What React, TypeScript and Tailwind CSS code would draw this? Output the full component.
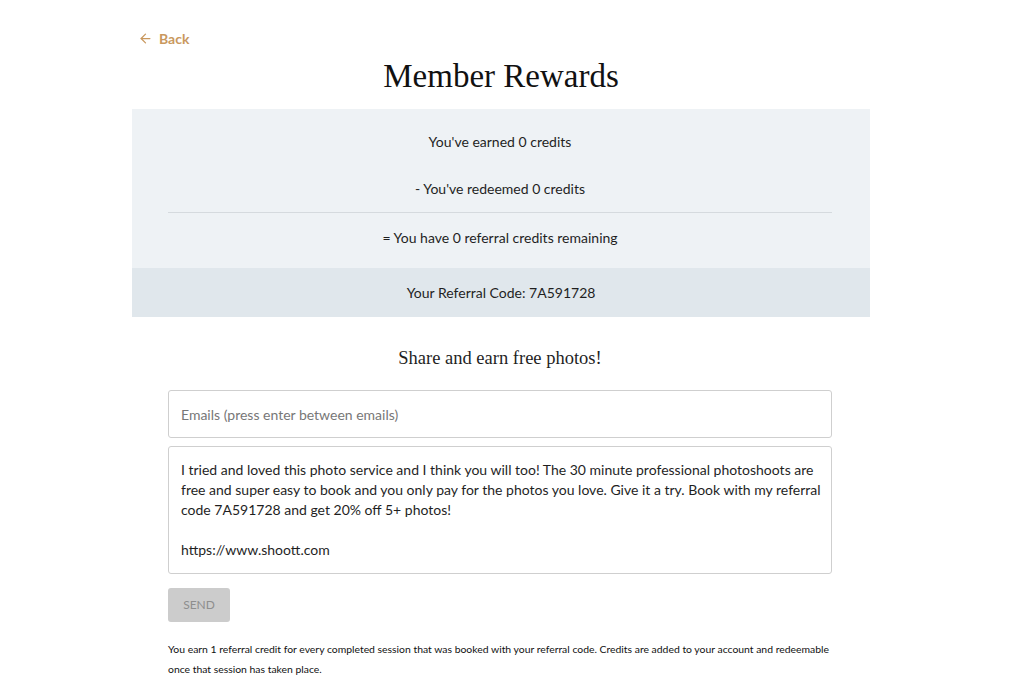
import { ArrowLeft } from "lucide-react";

const message =
  "I tried and loved this photo service and I think you will too! The 30 minute professional photoshoots are free and super easy to book and you only pay for the photos you love. Give it a try. Book with my referral code 7A591728 and get 20% off 5+ photos!\n\nhttps://www.shoott.com";

const App = () => {
  return (
    <div className="min-h-screen bg-white font-['Lato',sans-serif] text-[#1f1f1f]">
      <div className="w-[738px] pt-[28px] ml-[132px]">
        <a
          href="#"
          className="flex items-center gap-[6px] pl-[6px] text-[14px] font-bold text-[#c9985e]"
        >
          <ArrowLeft size={15} strokeWidth={2} />
          Back
        </a>
        <h1 className="mt-[7px] text-center font-['Liberation_Serif',serif] text-[33px] leading-[40px] text-[#111]">
          Member Rewards
        </h1>
        <div className="mt-[13px] bg-[#eef2f5] pl-[36px] pr-[38px] text-[14px]">
          <div className="flex h-[56px] items-center justify-center pt-[8px]">
            You've earned 0 credits
          </div>
          <div className="flex h-[48px] items-center justify-center border-b border-[#d5dade]">
            - You've redeemed 0 credits
          </div>
          <div className="flex h-[55px] items-center justify-center pb-[6px]">
            = You have 0 referral credits remaining
          </div>
        </div>
        <div className="flex h-[49px] items-center justify-center bg-[#e0e7ec] text-[14px]">
          Your Referral Code: 7A591728
        </div>
        <div className="pl-[36px] pr-[38px]">
          <h2 className="mt-[29px] text-center font-['Liberation_Serif',serif] text-[18.5px] leading-[24px]">
            Share and earn free photos!
          </h2>
          <input
            placeholder="Emails (press enter between emails)"
            className="mt-[20px] block h-[48px] w-full rounded-[3px] border border-[#cfcfcf] px-[12px] text-[14px] outline-none placeholder:text-[#777]"
          />
          <textarea
            defaultValue={message}
            className="mt-[8px] block h-[128px] w-full resize-none rounded-[3px] border border-[#cfcfcf] pl-[12px] pr-[8px] py-[13px] text-[14px] leading-[20px] outline-none"
          />
          <button
            disabled
            className="mt-[14px] h-[34px] w-[62px] rounded-[3px] bg-[#cccccc] text-[12px] text-[#8e8e8e]"
          >
            SEND
          </button>
          <p className="mt-[17px] text-[10.4px] leading-[20px] text-[#111]">
            You earn 1 referral credit for every completed session that was booked with your referral code. Credits are added to your account and redeemable once that session has taken place.
          </p>
        </div>
      </div>
    </div>
  );
};

export default App;
